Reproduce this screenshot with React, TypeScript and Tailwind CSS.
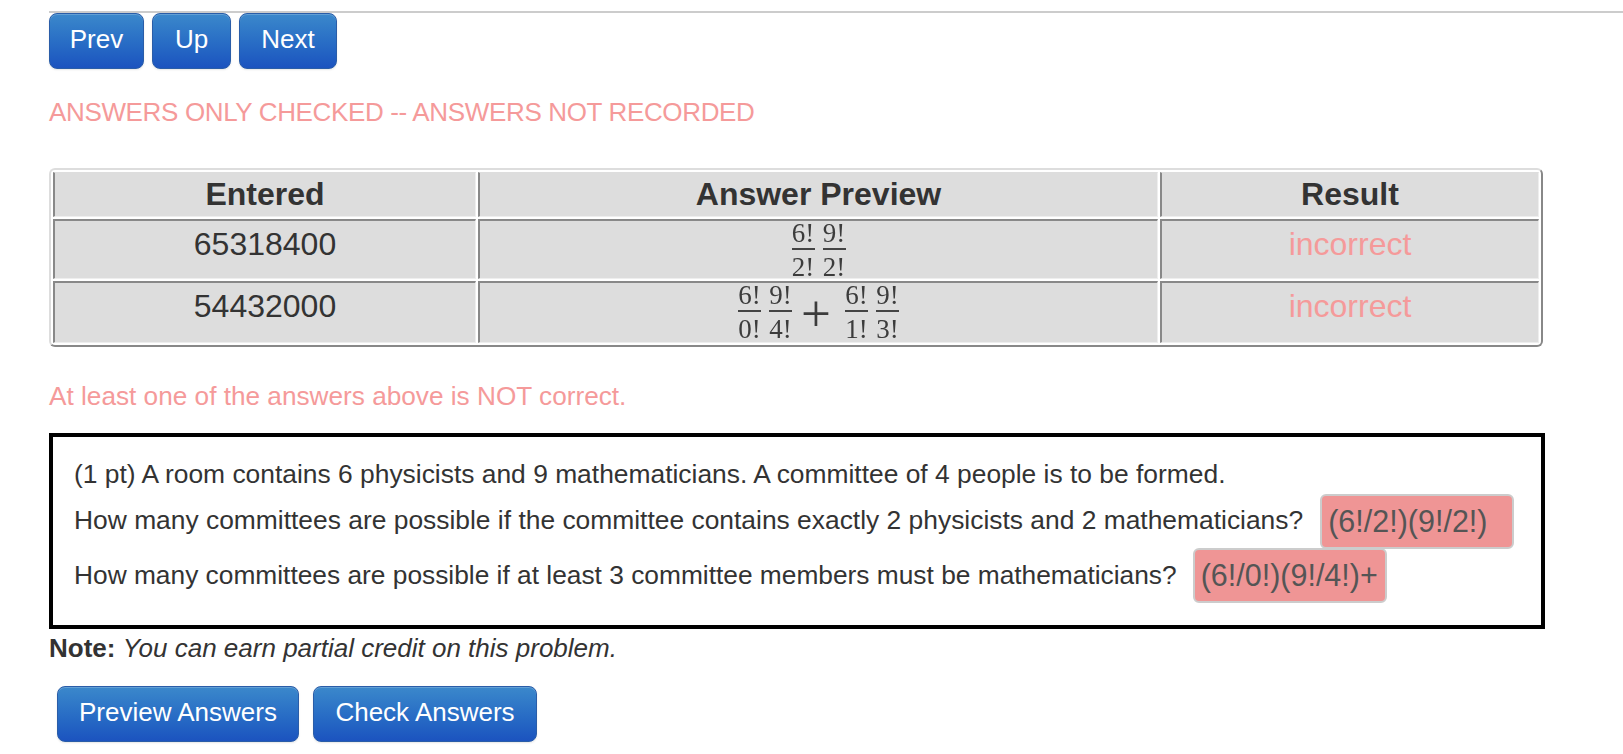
function NavButton({ label, className }: { label: string; className: string }) {
  return (
    <button
      className={`h-[56px] rounded-[8px] border border-[#2a5da8] bg-gradient-to-b from-[#3b88cb] to-[#1c53bf] pb-[3px] text-white shadow-[inset_0_1px_0_rgba(255,255,255,0.2),0_1px_2px_rgba(0,0,0,0.1)] ${className}`}
    >
      {label}
    </button>
  );
}

function Frac({ n, d }: { n: string; d: string }) {
  return (
    <span className="inline-flex w-[23px] flex-col items-center text-[27px] text-[#3c3c3c] blur-[0.4px]">
      <span className="h-[27px] w-full border-b-2 border-[#444] text-center leading-[20px]">{n}</span>
      <span className="mt-[5px] h-[23px] text-center leading-[24px]">{d}</span>
    </span>
  );
}

function FracRow({ items }: { items: [string, string][] }) {
  return (
    <span className="inline-flex gap-2">
      {items.map((item, index) => (
        <Frac key={index} n={item[0]} d={item[1]} />
      ))}
    </span>
  );
}

const thClass =
  "h-[45px] border border-l-2 border-t-[#ddd] border-l-[#888] border-b-[#eee] border-r-[#eee] align-top pt-[1px] text-[32px] font-bold leading-[40px]";
const tdClass =
  "border border-l-2 border-t-2 border-t-[#888] border-l-[#888] border-b-[#eee] border-r-[#eee] align-top pt-[3px] text-[32px] leading-[40px]";

export default function App() {
  return (
    <div className="min-h-[754px] bg-white pl-[49px] pt-[11px] font-['Liberation_Sans',Arial,sans-serif] text-[#333]">
      <div className="h-[2px] bg-[#ccc]" />

      <div className="flex gap-2 text-[26px]">
        <NavButton label="Prev" className="w-[95px]" />
        <NavButton label="Up" className="w-[79px]" />
        <NavButton label="Next" className="w-[98px]" />
      </div>

      <p className="mt-[26px] text-[26px] leading-[34px] tracking-[-0.35px] text-[#f59a9a]">
        ANSWERS ONLY CHECKED -- ANSWERS NOT RECORDED
      </p>

      <table className="mt-[39px] w-[1494px] table-fixed border-separate border-spacing-[2px] rounded-[6px] border-2 border-t-[#ddd] border-l-[#ddd] border-b-[#888] border-r-[#888] bg-white text-center">
        <colgroup>
          <col className="w-[423px]" />
          <col className="w-[680px]" />
          <col />
        </colgroup>
        <thead>
          <tr className="bg-[#ddd]">
            <th className={thClass}>Entered</th>
            <th className={thClass}>Answer Preview</th>
            <th className={thClass}>Result</th>
          </tr>
        </thead>
        <tbody>
          <tr className="bg-[#ddd]">
            <td className={`${tdClass} h-[59px]`}>65318400</td>
            <td className={`${tdClass} h-[59px] font-['Liberation_Serif',serif]`}>
              <div className="-mt-[1px] flex justify-center">
                <FracRow items={[["6!", "2!"], ["9!", "2!"]]} />
              </div>
            </td>
            <td className={`${tdClass} h-[59px] text-[#f59a9a]`}>incorrect</td>
          </tr>
          <tr className="bg-[#ddd]">
            <td className={`${tdClass} h-[62px]`}>54432000</td>
            <td className={`${tdClass} h-[62px] font-['Liberation_Serif',serif]`}>
              <div className="-mt-[1px] flex items-center justify-center">
                <FracRow items={[["6!", "0!"], ["9!", "4!"]]} />
                <span className="ml-[9px] mr-[14px] font-['DejaVu_Sans_ExtraLight','Liberation_Serif',serif] text-[53px] leading-[44px] text-[#3c3c3c]">+</span>
                <FracRow items={[["6!", "1!"], ["9!", "3!"]]} />
              </div>
            </td>
            <td className={`${tdClass} h-[62px] text-[#f59a9a]`}>incorrect</td>
          </tr>
        </tbody>
      </table>

      <p className="mt-[32px] text-[26.2px] leading-[34px] text-[#f59a9a]">
        At least one of the answers above is NOT correct.
      </p>

      <div className="mt-[20px] h-[196px] w-[1496px] border-4 border-black pl-[21px] pt-[18px] text-[26.4px] leading-[38px]">
        <p>(1 pt) A room contains 6 physicists and 9 mathematicians. A committee of 4 people is to be formed.</p>
        <div className="flex h-[55px] items-center pt-[1px]">
          <span className="-mt-[2px]">How many committees are possible if the committee contains exactly 2 physicists and 2 mathematicians?</span>
          <input
            readOnly
            value="(6!/2!)(9!/2!)"
            className="ml-[17px] h-[55px] w-[194px] shrink-0 rounded-[6px] border-2 border-[#ccc] bg-[#ef9595] pl-[6px] text-[30.5px] text-[#555]"
          />
        </div>
        <div className="flex h-[55px] items-center">
          <span className="-mt-[2px] text-[26.32px]">How many committees are possible if at least 3 committee members must be mathematicians?</span>
          <input
            readOnly
            value="(6!/0!)(9!/4!)+"
            className="ml-[16px] h-[55px] w-[194px] shrink-0 rounded-[6px] border-2 border-[#ccc] bg-[#ef9595] pl-[6px] text-[30.5px] text-[#555]"
          />
        </div>
      </div>

      <p className="mt-[2px] text-[26px] leading-[34px]">
        <strong>Note:</strong> <em>You can earn partial credit on this problem.</em>
      </p>

      <div className="ml-[8px] mt-[21px] flex gap-[14px] text-[26px]">
        <NavButton label="Preview Answers" className="w-[242px]" />
        <NavButton label="Check Answers" className="w-[224px]" />
      </div>
    </div>
  );
}
